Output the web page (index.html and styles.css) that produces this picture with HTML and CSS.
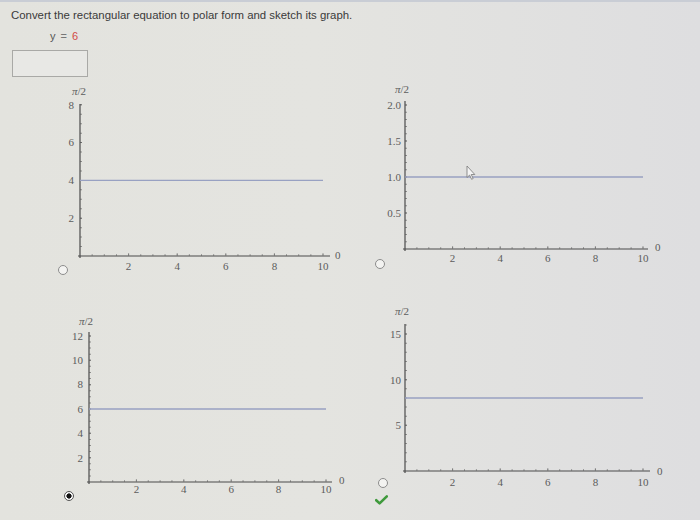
FILE: index.html
```html
<!DOCTYPE html>
<html>
<head>
<meta charset="utf-8">
<link rel="stylesheet" href="styles.css">
</head>
<body>
<div class="question">
  <p class="title">Convert the rectangular equation to polar form and sketch its graph.</p>
  <p class="equation"><span class="var">y</span> <span class="eq">=</span> <span class="num">6</span></p>
  <div class="answer-box"></div>
</div>
<div class="choices">
  <div class="choice c1">
    <span class="radio"></span>
    <svg class="plot" width="280" height="208" viewBox="0 0 280 208">
      <g class="axis">
        <line x1="8" y1="175" x2="260" y2="175"/>
        <line x1="10" y1="23" x2="10" y2="177"/>
        <line class="tick" x1="21.65" y1="174" x2="254" y2="174" stroke-width="2" stroke-dasharray="1 11.15"/>
        <line class="tick" x1="58.1" y1="173" x2="254" y2="173" stroke-width="4" stroke-dasharray="1 47.6"/>
        <line class="tick" x1="11" y1="166.05" x2="11" y2="22" stroke-width="2" stroke-dasharray="1 8.45"/>
        <line class="tick" x1="11" y1="137.7" x2="11" y2="22" stroke-width="4" stroke-dasharray="1 36.8"/>
      </g>
      <line class="curve" x1="10" y1="99.4" x2="253" y2="99.4"/>
      <g class="lbl ylbl">
        <text x="4" y="27.6">8</text>
        <text x="4" y="65.4">6</text>
        <text x="4" y="103.2">4</text>
        <text x="4" y="141">2</text>
      </g>
      <g class="lbl xlbl">
        <text x="58.6" y="188.5">2</text>
        <text x="107.2" y="188.5">4</text>
        <text x="155.8" y="188.5">6</text>
        <text x="204.4" y="188.5">8</text>
        <text x="253" y="188.5">10</text>
      </g>
      <text class="lbl" x="265" y="178">0</text>
      <text class="lbl" x="2" y="14"><tspan font-style="italic">π</tspan>/2</text>
    </svg>
  </div>
  <div class="choice c2">
    <span class="radio"></span>
    <svg class="plot" width="310" height="208" viewBox="0 0 310 208">
      <g class="axis">
        <line x1="13" y1="168" x2="258" y2="168"/>
        <line x1="15" y1="20" x2="15" y2="170"/>
        <line class="tick" x1="26.4" y1="167" x2="254" y2="167" stroke-width="2" stroke-dasharray="1 10.9"/>
        <line class="tick" x1="62.1" y1="166" x2="254" y2="166" stroke-width="4" stroke-dasharray="1 46.6"/>
        <line class="tick" x1="16" y1="161.3" x2="16" y2="20" stroke-width="2" stroke-dasharray="1 6.2"/>
        <line class="tick" x1="16" y1="132.5" x2="16" y2="20" stroke-width="4" stroke-dasharray="1 35"/>
      </g>
      <line class="curve" x1="15" y1="96" x2="253" y2="96"/>
      <g class="lbl ylbl">
        <text x="11" y="27.8">2.0</text>
        <text x="11" y="63.8">1.5</text>
        <text x="11" y="99.8">1.0</text>
        <text x="11" y="135.8">0.5</text>
      </g>
      <g class="lbl xlbl">
        <text x="62.6" y="180.5">2</text>
        <text x="110.2" y="180.5">4</text>
        <text x="157.8" y="180.5">6</text>
        <text x="205.4" y="180.5">8</text>
        <text x="253" y="180.5">10</text>
      </g>
      <text class="lbl" x="265" y="170">0</text>
      <text class="lbl" x="5" y="12"><tspan font-style="italic">π</tspan>/2</text>
      <path class="cursor" d="M77 85 v11.5 l2.6 -2.4 l2 4.2 l1.6 -0.8 l-2 -4 h3.6 z"/>
    </svg>
  </div>
  <div class="choice c3">
    <span class="radio selected"></span>
    <svg class="plot" width="272" height="230" viewBox="0 0 272 230">
      <g class="axis">
        <line x1="9" y1="193" x2="254" y2="193"/>
        <line x1="11" y1="43" x2="11" y2="195"/>
        <line class="tick" x1="22.35" y1="192" x2="249" y2="192" stroke-width="2" stroke-dasharray="1 10.85"/>
        <line class="tick" x1="57.9" y1="191" x2="249" y2="191" stroke-width="4" stroke-dasharray="1 46.4"/>
        <line class="tick" x1="12" y1="187.4" x2="12" y2="43" stroke-width="2" stroke-dasharray="1 5.085"/>
        <line class="tick" x1="12" y1="169.2" x2="12" y2="43" stroke-width="4" stroke-dasharray="1 23.34"/>
      </g>
      <line class="curve" x1="11" y1="120" x2="248" y2="120"/>
      <g class="lbl ylbl">
        <text x="5" y="50.8">12</text>
        <text x="5" y="75.1">10</text>
        <text x="5" y="99.4">8</text>
        <text x="5" y="123.8">6</text>
        <text x="5" y="148.1">4</text>
        <text x="5" y="172.5">2</text>
      </g>
      <g class="lbl xlbl">
        <text x="58.4" y="203.5">2</text>
        <text x="105.8" y="203.5">4</text>
        <text x="153.2" y="203.5">6</text>
        <text x="200.6" y="203.5">8</text>
        <text x="248" y="203.5">10</text>
      </g>
      <text class="lbl" x="261" y="195">0</text>
      <text class="lbl" x="1" y="36"><tspan font-style="italic">π</tspan>/2</text>
    </svg>
  </div>
  <div class="choice c4">
    <div class="mark-col">
      <span class="radio"></span>
      <svg class="check" width="13" height="10" viewBox="0 0 13 10"><path d="M1.2 5.2 L4.6 8.4 L11.8 1.4"/></svg>
    </div>
    <svg class="plot" width="308" height="230" viewBox="0 0 308 230">
      <g class="axis">
        <line x1="11" y1="182" x2="258" y2="182"/>
        <line x1="13" y1="35" x2="13" y2="184"/>
        <line class="tick" x1="24.4" y1="181" x2="252" y2="181" stroke-width="2" stroke-dasharray="1 10.9"/>
        <line class="tick" x1="60.1" y1="180" x2="252" y2="180" stroke-width="4" stroke-dasharray="1 46.6"/>
        <line class="tick" x1="14" y1="173.37" x2="14" y2="35" stroke-width="2" stroke-dasharray="1 8.13"/>
        <line class="tick" x1="14" y1="136.85" x2="14" y2="35" stroke-width="4" stroke-dasharray="1 44.65"/>
      </g>
      <line class="curve" x1="13" y1="109" x2="251" y2="109"/>
      <g class="lbl ylbl">
        <text x="9" y="48.8">15</text>
        <text x="9" y="94.5">10</text>
        <text x="9" y="140.2">5</text>
      </g>
      <g class="lbl xlbl">
        <text x="60.6" y="196.5">2</text>
        <text x="108.2" y="196.5">4</text>
        <text x="155.8" y="196.5">6</text>
        <text x="203.4" y="196.5">8</text>
        <text x="251" y="196.5">10</text>
      </g>
      <text class="lbl" x="265" y="186">0</text>
      <text class="lbl" x="3" y="26"><tspan font-style="italic">π</tspan>/2</text>
    </svg>
  </div>
</div>
</body>
</html>
```
FILE: styles.css
```css
html, body {
  margin: 0;
  padding: 0;
}
body {
  width: 700px;
  height: 520px;
  overflow: hidden;
  background: linear-gradient(to right, #e3e3de 0%, #e4e4e0 45%, #dedee0 100%);
  border-top: 2px solid #c9cdd5;
  box-sizing: border-box;
  font-family: "Liberation Sans", Arial, sans-serif;
  color: #3c3c3c;
}
.question {
  padding: 7px 0 0 11px;
}
.title {
  margin: 0;
  font-size: 11.4px;
  line-height: 13px;
  color: #3a3a3a;
}
.equation {
  margin: 8px 0 0 39px;
  font-size: 11px;
  line-height: 13px;
  color: #555;
  word-spacing: 2px;
}
.equation .eq {
  color: #777;
}
.equation .num {
  color: #d24a45;
}
.answer-box {
  margin: 7px 0 0 1px;
  width: 76px;
  height: 27px;
  box-sizing: border-box;
  border: 1px solid #a9a9a6;
  background: #e8e8e5;
}
.choices {
  margin-top: 4px;
  display: grid;
  grid-template-columns: 350px 350px;
  grid-template-rows: 208px 230px;
}
.choice {
  display: flex;
  align-items: flex-end;
}
.plot {
  display: block;
  flex: none;
  overflow: visible;
}
.radio {
  display: block;
  flex: none;
  width: 10px;
  height: 10px;
  box-sizing: border-box;
  border: 1px solid #8c8c8c;
  border-radius: 50%;
  background: #f3f3f1;
}
.radio.selected {
  border-color: #555;
  background: radial-gradient(circle, #111 0, #111 2.3px, #fafafa 2.9px);
}
.c1 .radio { margin: 0 2px 14px 58px; }
.c2 .radio { margin: 0 5px 20px 25px; }
.c3 .radio { margin: 0 4px 18px 64px; }
.mark-col {
  display: flex;
  flex-direction: column;
  align-items: center;
  gap: 7px;
  width: 10px;
  margin: 0 4px 14px 28px;
  flex: none;
}
.check {
  display: block;
  margin-left: -3px;
}
.check path {
  fill: none;
  stroke: #3f9a3c;
  stroke-width: 2.6;
  stroke-linecap: round;
  stroke-linejoin: round;
}
.axis line {
  stroke: #4a4a4a;
  stroke-width: 1.2;
}
.axis line.tick {
  stroke: #555;
}
.curve {
  stroke: #98a1c2;
  stroke-width: 1.4;
}
.lbl {
  font-family: "Liberation Serif", "Times New Roman", serif;
  font-size: 11px;
  fill: #5c5c5c;
}
.ylbl text {
  text-anchor: end;
}
.xlbl text {
  text-anchor: middle;
}
.cursor {
  fill: #f4f4f4;
  stroke: #777;
  stroke-width: 0.8;
  stroke-linejoin: round;
}
```
